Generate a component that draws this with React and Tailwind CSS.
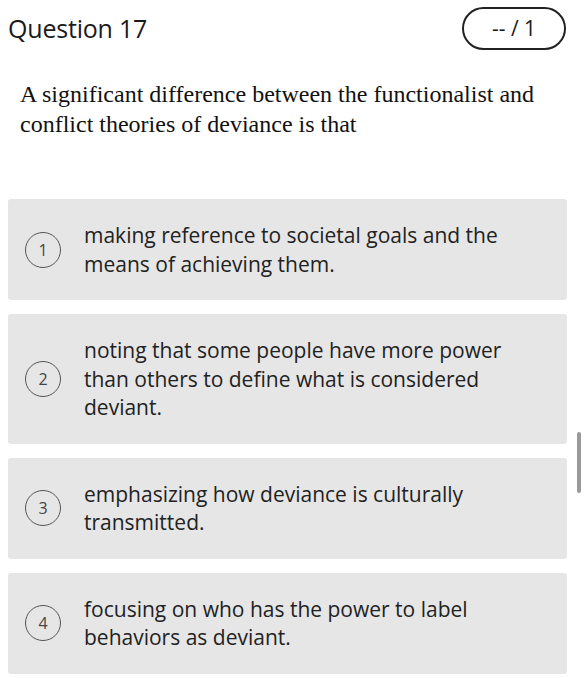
import React from 'react'

const options = [
  'making reference to societal goals and the means of achieving them.',
  'noting that some people have more power than others to define what is considered deviant.',
  'emphasizing how deviance is culturally transmitted.',
  'focusing on who has the power to label behaviors as deviant.',
]

export default function App() {
  return (
    <div className="relative w-[586px] h-[678px] bg-white overflow-hidden text-[#1a1a1a]" style={{ fontFamily: '"Open Sans", sans-serif' }}>
      {/* Header */}
      <div className="flex items-center justify-between pl-[8px] pr-[20px] pt-[7px]">
        <h1 className="text-[25px] leading-none tracking-[-0.2px]">Question 17</h1>
        <div className="w-[104px] h-[43px] rounded-full border-2 border-[#222] flex items-center justify-center text-[21px]">
          -- / 1
        </div>
      </div>

      {/* Question text */}
      <p className="mt-[29px] px-[20px] text-[24px] leading-[30px] text-[#111]" style={{ fontFamily: '"Liberation Serif", serif' }}>
        A significant difference between the functionalist and conflict theories of deviance is that
      </p>

      {/* Options */}
      <div className="mt-[60px] pl-[8px] pr-[19px] flex flex-col gap-[14px]">
        {options.map((text, i) => (
          <div key={i} className="flex items-center bg-[#e6e6e6] rounded-[3px] px-[17px] py-[22px]">
            <div className="w-[36px] h-[36px] shrink-0 rounded-full border-[1.5px] border-[#555] flex items-center justify-center text-[16px] text-[#444]">
              {i + 1}
            </div>
            <div className="ml-[23px] text-[21px] leading-[28.5px] text-[#222] pr-[36px]">{text}</div>
          </div>
        ))}
      </div>

      {/* scrollbar */}
      <div className="absolute left-[577px] top-[432px] w-[4px] h-[61px] rounded-full bg-[#9a9a9a]" />
    </div>
  )
}
